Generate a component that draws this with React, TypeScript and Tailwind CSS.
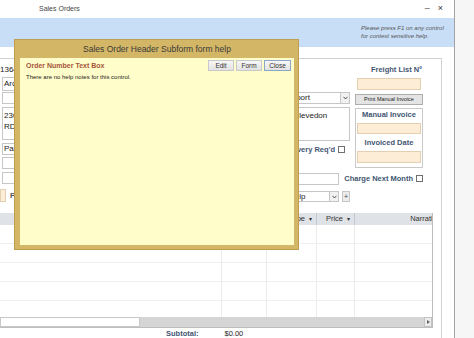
import React from 'react';

const labelCls = "text-[7.5px] font-bold text-[#3f5672] whitespace-nowrap leading-none";
const boxCls = "border border-[#c6c6c6] bg-white";
const peachCls = "border border-[#e3cfb2] bg-[#fdecd6]";

const Check = () => <div className="w-[7px] h-[7px] border border-[#707070] bg-white shrink-0" />;

const Combo = ({ text, className }: { text: string; className: string }) => (
    <div className={`${boxCls} flex ${className}`}>
        <div className="flex-1 text-[8px] leading-none flex items-center pl-[4px] text-[#222] whitespace-nowrap overflow-hidden">{text}</div>
        <div className="w-[9px] border-l border-[#c6c6c6] bg-[#f1f1f1] flex items-center justify-center">
            <svg width="5" height="4" viewBox="0 0 5 4"><path d="M0.5 0.8 L2.5 3 L4.5 0.8" stroke="#444" strokeWidth="0.9" fill="none" /></svg>
        </div>
    </div>
);

const HelpDialog = () => (
    <div className="absolute left-[14px] top-[39px] w-[285px] h-[211px] bg-[#d4b766] border border-[#bf9f4f] flex flex-col pl-[5px] pr-[4px] pb-[4px]">
        <div className="h-[18px] flex items-center justify-center text-[8.5px] text-[#3a3a3a]">
            Sales Order Header Subform form help
        </div>
        <div className="flex-1 bg-[#fffdc9] flex flex-col px-[6px] pr-[3px]">
            <div className="flex items-center pt-[2px] h-[13px]">
                <span className="flex-1 text-[7px] font-bold text-[#a5553c] leading-none">Order Number Text Box</span>
                <div className="flex gap-[2px]">
                    {['Edit', 'Form', 'Close'].map(b => (
                        <div
                            key={b}
                            className={`h-[11px] w-[26px] flex items-center justify-center text-[6.5px] text-[#333] bg-gradient-to-b from-[#f7f7f7] to-[#e2e2e2] border ${
                                b === 'Close' ? 'border-[#8aa6c8] w-[27px]' : 'border-[#c9c9c9]'
                            }`}
                        >
                            {b}
                        </div>
                    ))}
                </div>
            </div>
            <p className="mt-[3px] text-[6px] text-[#222] leading-none">There are no help notes for this control.</p>
        </div>
    </div>
);

export default function App() {
    return (
        <div className="w-[474px] h-[338px] relative overflow-hidden bg-[#f6f6f6] font-['Liberation_Sans',Arial,sans-serif]">
            <div className="w-[455px] h-full bg-white border-r border-[#a3a3a3] flex flex-col">
                {/* window title */}
                <div className="h-[18px] flex items-center pl-[39px] pr-[11px] text-[7px] text-[#444]">
                    <span className="flex-1">Sales Orders</span>
                    <span className="text-[9px] mr-[8px] text-[#555]">–</span>
                    <span className="text-[9px] text-[#333]">×</span>
                </div>

                {/* help band */}
                <div className="h-[29px] bg-[#c8ddf6] flex justify-end items-center pr-[8px]">
                    <p className="italic text-[6px] leading-[7.5px] text-[#555] w-[85px]">
                        Please press F1 on any control
                        <br />
                        for context sensitive help.
                    </p>
                </div>
                <div className="h-[11px]" />

                {/* form */}
                <div className="flex-1 border-t border-r border-[#d2d2d2] mr-[12px] flex flex-col">
                    <div className="h-[154px] flex shrink-0">
                        {/* left column */}
                        <div className="w-[80px] flex flex-col">
                            <div className="mt-[5px] h-[12px] flex items-center text-[8px] text-[#222]">13642</div>
                            <div className={`${boxCls} ml-[2px] mt-[1px] h-[14px] flex items-center pl-[1px] text-[8px] text-[#222]`}>Archer Farms</div>
                            <div className={`${boxCls} ml-[2px] mt-[1px] h-[12px]`} />
                            <div className={`${boxCls} ml-[2px] mt-[3px] h-[33px] pt-[2px] pl-[1px] text-[8px] leading-[11px] text-[#222]`}>
                                230 Monument
                                <br />
                                RD2
                            </div>
                            <div className={`${boxCls} ml-[2px] mt-[3px] h-[12px] flex items-center pl-[1px] text-[8px] text-[#222]`}>Papakura</div>
                            <div className={`${boxCls} ml-[2px] mt-[2px] h-[12px]`} />
                            <div className={`${boxCls} ml-[2px] mt-[3px] h-[12px]`} />
                            <div className="mt-[5px] h-[13px] flex items-center">
                                <div className={`${peachCls} w-[6px] h-full`} />
                                <span className="ml-[4px] text-[8px] font-bold text-[#555]">P</span>
                            </div>
                        </div>

                        {/* middle column */}
                        <div className="ml-[188px] w-[82px] flex flex-col">
                            <Combo text="Davenport" className="mt-[33px] h-[12px]" />
                            <div className={`${boxCls} mt-[3px] h-[34px] pt-[2px] pl-[4px] text-[8px] leading-[11px] text-[#222] whitespace-nowrap overflow-hidden`}>
                                RD 2 Clevedon
                            </div>
                            <div className="mt-[4px] h-[9px] flex items-center justify-end gap-[3px] pr-[5px]">
                                <span className={labelCls}>Delivery Req'd</span>
                                <Check />
                            </div>
                            <div className={`${boxCls} mt-[19px] h-[12px] mr-[11px]`} />
                            <div className="mt-[6px] h-[11px] flex gap-[3px]">
                                <Combo text="Self Help" className="flex-1 h-full" />
                                <div className="w-[8px] h-full border border-[#c6c6c6] bg-[#ececec] flex items-center justify-center text-[7px] text-[#444] leading-none">+</div>
                            </div>
                        </div>

                        {/* right column */}
                        <div className="ml-[5px] w-[68px] flex flex-col">
                            <div className="mt-[6px] h-[10px] flex items-center justify-end pr-[1px]">
                                <span className={labelCls}>Freight List Nº</span>
                            </div>
                            <div className={`${peachCls} mt-[3px] mx-[2px] h-[12px]`} />
                            <div className="mt-[4px] h-[11px] border border-[#adadad] bg-[#e4e4e4] flex items-center justify-center text-[5.5px] text-[#222] whitespace-nowrap leading-none">
                                Print Manual Invoice
                            </div>
                            <div className="mt-[3px] h-[60px] border border-[#c9c9c9] flex flex-col px-[1px]">
                                <div className="h-[11px] flex items-center justify-center">
                                    <span className={labelCls}>Manual Invoice</span>
                                </div>
                                <div className={`${peachCls} mt-[3px] h-[11px]`} />
                                <div className="mt-[3px] h-[11px] flex items-center justify-center">
                                    <span className={labelCls}>Invoiced Date</span>
                                </div>
                                <div className={`${peachCls} mt-[3px] h-[12px]`} />
                            </div>
                            <div className="mt-[6px] h-[9px] flex items-center justify-end gap-[3px]">
                                <span className={labelCls}>Charge Next Month</span>
                                <Check />
                            </div>
                        </div>
                    </div>

                    {/* datasheet */}
                    <div className="mr-[8px] border-r border-b border-[#bdbdbd] flex flex-col">
                        <div className="h-[12px] bg-[#dfe2e7] flex text-[7.5px] text-[#333] leading-none">
                            <div className="w-[222px]" />
                            <div className="w-[45px]" />
                            <div className="w-[50px] border-r border-[#c4c8ce] flex items-center justify-end gap-[4px] pr-[4px]">
                                <span>Type</span>
                                <span className="text-[6px]">▾</span>
                            </div>
                            <div className="w-[38px] border-r border-[#c4c8ce] flex items-center justify-end gap-[4px] pr-[4px]">
                                <span>Price</span>
                                <span className="text-[6px]">▾</span>
                            </div>
                            <div className="flex-1 flex items-center justify-end overflow-hidden whitespace-nowrap">
                                <span className="-mr-[9px]">Narration</span>
                            </div>
                        </div>
                        <div className="h-[92px] flex flex-col">
                            {[0, 1, 2, 3, 4].map(r => (
                                <div key={r} className="h-[19px] flex border-b border-[#efefef] last:border-b-0 last:h-[16px]">
                                    <div className="w-[222px] border-r border-[#ececec]" />
                                    <div className="w-[45px] border-r border-[#ececec]" />
                                    <div className="w-[50px] border-r border-[#ececec]" />
                                    <div className="w-[38px] border-r border-[#ececec]" />
                                    <div className="flex-1" />
                                </div>
                            ))}
                        </div>
                        <div className="h-[10px] flex">
                            <div className="w-[140px] border border-[#c8c8c8] bg-white" />
                            <div className="flex-1 bg-[#d5d5d5]" />
                            <div className="w-[8px] bg-[#ececec] border border-[#c3c3c3] flex items-center justify-center">
                                <svg width="3" height="4" viewBox="0 0 3 4"><path d="M0 0 L3 2 L0 4 Z" fill="#666" /></svg>
                            </div>
                        </div>
                    </div>

                    <div className="flex mt-[2px] text-[7.5px] leading-none">
                        <span className="ml-[166px] font-bold text-[#3f5672]">Subtotal:</span>
                        <span className="ml-[26px] text-[#222]">$0.00</span>
                    </div>
                </div>
            </div>

            <HelpDialog />
        </div>
    );
}
